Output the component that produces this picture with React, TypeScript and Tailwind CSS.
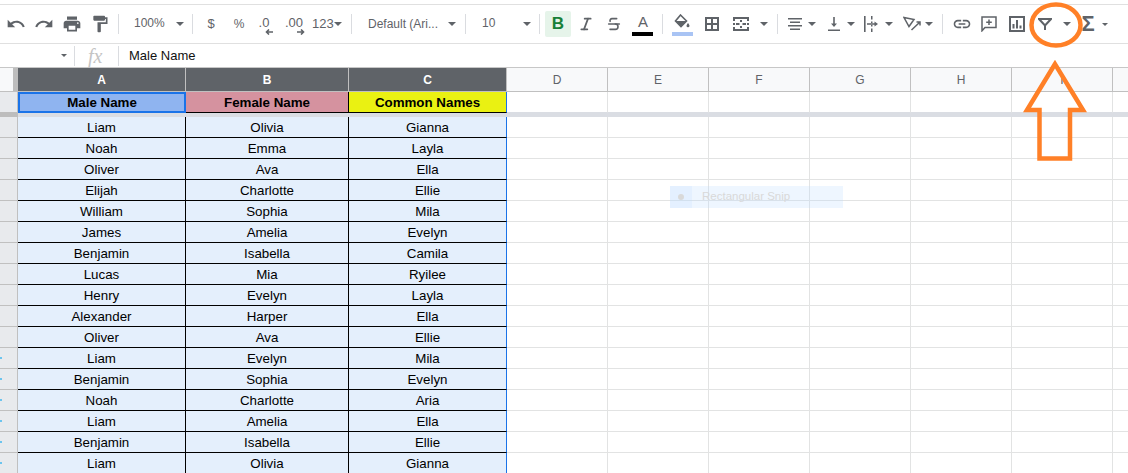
import { Italic, Strikethrough } from "lucide-react"
import type { ReactNode } from "react"

const ROWS = [
  ["Liam", "Olivia", "Gianna"],
  ["Noah", "Emma", "Layla"],
  ["Oliver", "Ava", "Ella"],
  ["Elijah", "Charlotte", "Ellie"],
  ["William", "Sophia", "Mila"],
  ["James", "Amelia", "Evelyn"],
  ["Benjamin", "Isabella", "Camila"],
  ["Lucas", "Mia", "Ryilee"],
  ["Henry", "Evelyn", "Layla"],
  ["Alexander", "Harper", "Ella"],
  ["Oliver", "Ava", "Ellie"],
  ["Liam", "Evelyn", "Mila"],
  ["Benjamin", "Sophia", "Evelyn"],
  ["Noah", "Charlotte", "Aria"],
  ["Liam", "Amelia", "Ella"],
  ["Benjamin", "Isabella", "Ellie"],
  ["Liam", "Olivia", "Gianna"],
]

const EMPTY_COLS = ["D", "E", "F", "G", "H", "I"]

function Sep({ className = "" }: { className?: string }) {
  return <div className={`w-px h-[20px] shrink-0 bg-[#dadce0] ${className}`} />
}

function Caret({ className = "" }: { className?: string }) {
  return <div className={`w-0 h-0 shrink-0 border-x-[4px] border-x-transparent border-t-[4px] border-t-[#5f6368] ${className}`} />
}

function SmallCaret({ className = "" }: { className?: string }) {
  return <div className={`w-0 h-0 shrink-0 border-x-[3px] border-x-transparent border-t-[3px] border-t-[#5f6368] ${className}`} />
}

function Icon({ className = "", children }: { className?: string; children: ReactNode }) {
  return (
    <svg viewBox="0 0 24 24" fill="#5f6368" className={`w-[20px] h-[20px] shrink-0 ${className}`}>
      {children}
    </svg>
  )
}

function Cell({ className = "", children }: { className?: string; children: ReactNode }) {
  return <div className={`flex items-center justify-center shrink-0 text-[#5f6368] ${className}`}>{children}</div>
}

function Toolbar() {
  return (
    <div className="h-[39px] flex items-center pl-[6px] border-b border-[#e0e0e0] text-[13px] text-[#5f6368]">
      <Icon><path d="M12.5 8c-2.65 0-5.05.99-6.9 2.6L2 7v9h9l-3.62-3.62c1.39-1.16 3.16-1.88 5.12-1.88 3.54 0 6.55 2.31 7.6 5.5l2.37-.78C21.08 11.03 17.15 8 12.5 8z" /></Icon>
      <Icon className="ml-[8px]"><path d="M18.4 10.6C16.55 8.99 14.15 8 11.5 8c-4.65 0-8.58 3.03-9.96 7.22L3.9 16c1.05-3.19 4.05-5.5 7.6-5.5 1.95 0 3.73.72 5.12 1.88L13 16h9V7l-3.6 3.6z" /></Icon>
      <Icon className="ml-[8px]"><path d="M19 8H5c-1.66 0-3 1.34-3 3v6h4v4h12v-4h4v-6c0-1.66-1.34-3-3-3zm-3 11H8v-5h8v5zm3-7c-.55 0-1-.45-1-1s.45-1 1-1 1 .45 1 1-.45 1-1 1zm-1-9H6v4h12V3z" /></Icon>
      <Icon className="ml-[8px]"><path d="M18 4V3c0-.55-.45-1-1-1H5c-.55 0-1 .45-1 1v4c0 .55.45 1 1 1h12c.55 0 1-.45 1-1V6h1v4H9v11c0 .55.45 1 1 1h2c.55 0 1-.45 1-1v-9h8V4h-3z" /></Icon>
      <Sep className="ml-[8px]" />

      <span className="ml-[15px] w-[29px] -mt-[2px] text-[12px]">100%</span>
      <Caret className="ml-[13px]" />
      <Sep className="ml-[8px]" />

      <Cell className="w-[36px] font-medium">$</Cell>
      <Cell className="w-[20px] text-[12px]">%</Cell>
      <Cell className="w-[30px] relative">
        <span className="-mt-[2px]">.0</span>
        <svg viewBox="0 0 10 6" className="absolute left-[16px] top-[14px] w-[10px] h-[6px]" fill="none" stroke="#5f6368" strokeWidth="1.6"><path d="M8 3H2M4 .5 1.5 3 4 5.5" /></svg>
      </Cell>
      <Cell className="w-[30px] relative">
        <span className="-mt-[2px]">.00</span>
        <svg viewBox="0 0 10 6" className="absolute left-[16px] top-[14px] w-[10px] h-[6px]" fill="none" stroke="#5f6368" strokeWidth="1.6"><path d="M2 3h6M6 .5 8.500 3 6 5.500" /></svg>
      </Cell>
      <span className="ml-[3px] w-[20px]">123</span>
      <Caret className="ml-[2px]" />
      <Sep className="ml-[9px]" />

      <span className="ml-[16px] w-[70px] text-[12px] whitespace-nowrap">Default (Ari...</span>
      <Caret className="ml-[10px]" />
      <Sep className="ml-[9px]" />

      <span className="ml-[16px] w-[14px] text-[12px] -mt-[2px]">10</span>
      <Caret className="ml-[27px]" />
      <Sep className="ml-[8px]" />

      <div className="ml-[5px] w-[26px] h-[26px] rounded-[2px] bg-[#e6f4ea] flex items-center justify-center text-[#188038] text-[17px] font-bold shrink-0">B</div>
      <Cell className="w-[30px]"><Italic size={16} strokeWidth={2.6} /></Cell>
      <Cell className="w-[26px]"><Strikethrough size={16} strokeWidth={2.4} /></Cell>
      <Cell className="w-[32px] relative h-[26px]">
        <span className="text-[15px] leading-[15px] -mt-[5px]">A</span>
        <div className="absolute left-[5px] bottom-[1px] w-[21px] h-[4px] bg-black" />
      </Cell>
      <Sep className="ml-[3px]" />

      <Cell className="w-[38px] relative h-[26px]">
        <svg viewBox="0 0 16 14" className="w-[16px] h-[14px] -mt-[6px]">
          <path d="M6.500 1 12.500 7 7 12.500 1.500 7z" fill="none" stroke="#5f6368" strokeWidth="1.600" />
          <path d="M1.500 7H12.500L7 12.500z" fill="#5f6368" />
          <path d="M14 9s-1.500 1.700-1.500 2.800a1.500 1.500 0 0 0 3 0C15.500 10.700 14 9 14 9z" fill="#5f6368" />
        </svg>
        <div className="absolute left-[9px] bottom-[1px] w-[21px] h-[4px] bg-[#a9c4f4]" />
      </Cell>
      <Cell className="w-[22px]">
        <svg viewBox="0 0 14 14" className="w-[14px] h-[14px]" fill="none" stroke="#5f6368" strokeWidth="2"><path d="M1 1h12v12H1zM7 1v12M1 7h12" /></svg>
      </Cell>
      <Cell className="w-[36px]">
        <svg viewBox="0 0 16 14" className="w-[16px] h-[14px]" fill="none" stroke="#5f6368" strokeWidth="2"><path d="M1 4V1h14v3M1 10v3h14v-3M1 6v2M15 6v2M3 7h3.500M13 7H9.500M8 3v2M8 9v2" /></svg>
      </Cell>
      <Caret className="ml-[1px]" />
      <Sep className="ml-[9px]" />

      <Cell className="w-[24px] ml-[5px]">
        <svg viewBox="0 0 14 12" className="w-[14px] h-[12px]" fill="#5f6368"><path d="M0 0h14v1.600H0zM2 3.500h10v1.600H2zM0 7h14v1.600H0zM2 10.400h10V12H2z" /></svg>
      </Cell>
      <Caret className="ml-[1px]" />
      <Cell className="w-[24px] ml-[6px]">
        <svg viewBox="0 0 14 14" className="w-[14px] h-[14px]" fill="#5f6368"><path d="M6.200 0h1.600v6.500H10L7 10 4 6.500h2.200zM1 12.400h12V14H1z" /></svg>
      </Cell>
      <Caret className="ml-[1px]" />
      <Cell className="w-[24px] ml-[4px]">
        <svg viewBox="0 0 14 16" className="w-[14px] h-[16px]" fill="#5f6368"><path d="M0 0h1.600v16H0zM7 0h1.500v3.500H7zM7 5.500h1.500V7H7zM7 9h1.500v1.500H7zM7 12.500h1.500V16H7zM3 7.200h7.500V5.500L14 8l-3.500 2.500V8.800H3z" /></svg>
      </Cell>
      <Caret className="ml-[2px]" />
      <Cell className="w-[24px] ml-[7px]">
        <svg viewBox="0 0 18 16" className="w-[18px] h-[16px]" fill="none" stroke="#5f6368" strokeWidth="1.500"><path d="M1 1.500 11 3.500 6 10.500zM8.500 14 17 6M13.500 6H17v3.500" /></svg>
      </Cell>
      <Caret className="ml-[1px]" />
      <Sep className="ml-[9px]" />

      <Icon className="ml-[9px]"><path d="M3.900 12c0-1.710 1.390-3.100 3.100-3.100h4V7H7c-2.760 0-5 2.240-5 5s2.240 5 5 5h4v-1.900H7c-1.710 0-3.100-1.390-3.100-3.100zM8 13h8v-2H8v2zm9-6h-4v1.900h4c1.710 0 3.100 1.390 3.100 3.100s-1.390 3.100-3.100 3.100h-4V17h4c2.760 0 5-2.240 5-5s-2.240-5-5-5z" /></Icon>
      <Cell className="w-[16px] ml-[9px]">
        <svg viewBox="0 0 16 16" className="w-[16px] h-[16px]" fill="none" stroke="#5f6368" strokeWidth="1.500"><path d="M1 1h14v10.500H4L1 14.800zM8 3.500v5.500M5.200 6.200h5.600" /></svg>
      </Cell>
      <Cell className="w-[16px] ml-[12px]">
        <svg viewBox="0 0 16 16" className="w-[16px] h-[16px]" fill="none" stroke="#5f6368" strokeWidth="2"><path d="M1 1h14v14H1zM4.500 8v4.500M8 4v8.500M11.500 9.500v3" /></svg>
      </Cell>
      <Cell className="w-[14px] ml-[13px]">
        <svg viewBox="0 0 14 12" className="w-[14px] h-[12px]" fill="none" stroke="#5f6368" strokeWidth="2"><path d="M1 1h12L7 7.500zM7 7v5" /></svg>
      </Cell>
      <Caret className="ml-[11px]" />
      <span className="ml-[9px] w-[16px] text-[22px] leading-none text-center font-bold">Σ</span>
      <SmallCaret className="ml-[6px]" />
    </div>
  )
}

function FormulaBar() {
  return (
    <div className="h-[24px] flex items-center border-b border-[#c7c7c7] text-[13px] text-black">
      <SmallCaret className="ml-[61px]" />
      <Sep className="ml-[7px]" />
      <span className="ml-[13px] w-[18px] text-[20px] leading-none italic text-[#c4c4c4] font-['Liberation_Serif',serif]">fx</span>
      <Sep className="ml-[12px]" />
      <span className="ml-[10px] text-[#111]">Male Name</span>
    </div>
  )
}

function HeaderRow() {
  return (
    <div className="h-[24px] flex text-[12px] font-bold">
      <div className="w-[18px] shrink-0 flex border-b border-[#c0c0c0]">
        <div className="w-[13px] bg-[#f8f9fa]" />
        <div className="w-[5px] bg-[#bdbdbd]" />
      </div>
      <div className="w-[168px] shrink-0 bg-[#5f6368] text-white flex items-center justify-center border-r border-[#c0c0c0] border-b">A</div>
      <div className="w-[163px] shrink-0 bg-[#5f6368] text-white flex items-center justify-center border-r border-[#c0c0c0] border-b">B</div>
      <div className="w-[158px] shrink-0 bg-[#5f6368] text-white flex items-center justify-center border-r border-[#c0c0c0] border-b">C</div>
      {EMPTY_COLS.map(c => (
        <div key={c} className="w-[101px] shrink-0 bg-[#f8f9fa] text-[#5f6368] font-normal flex items-center justify-center border-r border-b border-[#c0c0c0]">{c}</div>
      ))}
      <div className="flex-1 bg-[#f8f9fa] border-b border-[#c0c0c0]" />
    </div>
  )
}

function TitleRow() {
  return (
    <div className="h-[21px] flex text-[13.33px] font-bold text-black">
      <div className="w-[18px] shrink-0 bg-[#e8eaed] border-r border-[#c0c0c0] border-b border-b-[#bdbdbd]" />
      <div className="w-[168px] shrink-0 bg-[#8fb4f0] border-2 border-[#1a73e8] flex items-center justify-center">Male Name</div>
      <div className="w-[163px] shrink-0 bg-[#d5929f] border-r border-b border-black pt-[2px] flex items-center justify-center">Female Name</div>
      <div className="w-[158px] shrink-0 bg-[#eaf112] border-r border-r-[#1a73e8] border-b border-b-black pt-[2px] flex items-center justify-center">Common Names</div>
      {EMPTY_COLS.map(c => (
        <div key={c} className="w-[101px] shrink-0 border-r border-r-[#e2e3e3] border-b border-b-[#dadde3]" />
      ))}
      <div className="flex-1 border-b border-[#dadde3]" />
    </div>
  )
}

function DataRow({ row, tick }: { row: string[]; tick: boolean }) {
  return (
    <div className="h-[21px] flex text-[13.33px] text-black">
      <div className="w-[18px] shrink-0 relative bg-[#e8eaed] border-r border-b border-[#c0c0c0]">
        {tick && <div className="absolute left-0 top-[9px] w-[2px] h-[2px] bg-[#6cc4ee]" />}
      </div>
      <div className="w-[168px] shrink-0 bg-[#e4effc] border-r border-b border-black pt-[2px] flex items-center justify-center">{row[0]}</div>
      <div className="w-[163px] shrink-0 bg-[#e4effc] border-r border-b border-black pt-[2px] flex items-center justify-center">{row[1]}</div>
      <div className="w-[158px] shrink-0 bg-[#e4effc] border-r border-r-[#1a73e8] border-b border-b-black pt-[2px] flex items-center justify-center">{row[2]}</div>
      {EMPTY_COLS.map(c => (
        <div key={c} className="w-[101px] shrink-0 border-r border-b border-[#e2e3e3]" />
      ))}
      <div className="flex-1 border-b border-[#e2e3e3]" />
    </div>
  )
}

export default function App() {
  return (
    <div className="relative w-[1128px] h-[473px] overflow-hidden bg-white font-['Liberation_Sans',Arial,sans-serif]">
      <div className="h-[5px] border-b border-[#e0e0e0]" />
      <Toolbar />
      <FormulaBar />
      <HeaderRow />
      <TitleRow />
      <div className="h-[4px] flex bg-[#dadde3]">
        <div className="w-[18px] bg-[#bdbdbd]" />
      </div>
      {ROWS.map((row, i) => (
        <DataRow key={i} row={row} tick={i >= 11} />
      ))}

      {/* faded snip tool toast */}
      <div className="absolute left-[670px] top-[186px] w-[173px] h-[22px] flex items-center bg-[#bcdcff]/25 text-[11.5px] text-[#d9d9d9]">
        <div className="w-[22px] h-full flex items-center justify-center bg-[#bcdcff]/20">
          <div className="w-[6px] h-[6px] rounded-full bg-[#d9d9d9]" />
        </div>
        <span className="ml-[10px]">Rectangular Snip</span>
      </div>

      {/* orange annotation */}
      <svg viewBox="0 0 1128 473" className="absolute inset-0 w-[1128px] h-[473px] pointer-events-none" fill="none" stroke="#ff8027" strokeWidth="4.500">
        <ellipse cx="1056" cy="25" rx="24.500" ry="20.500" />
        <path d="M1055 64 1027 110H1039.500V158.500H1070V110H1083Z" strokeLinejoin="miter" />
      </svg>
    </div>
  )
}
